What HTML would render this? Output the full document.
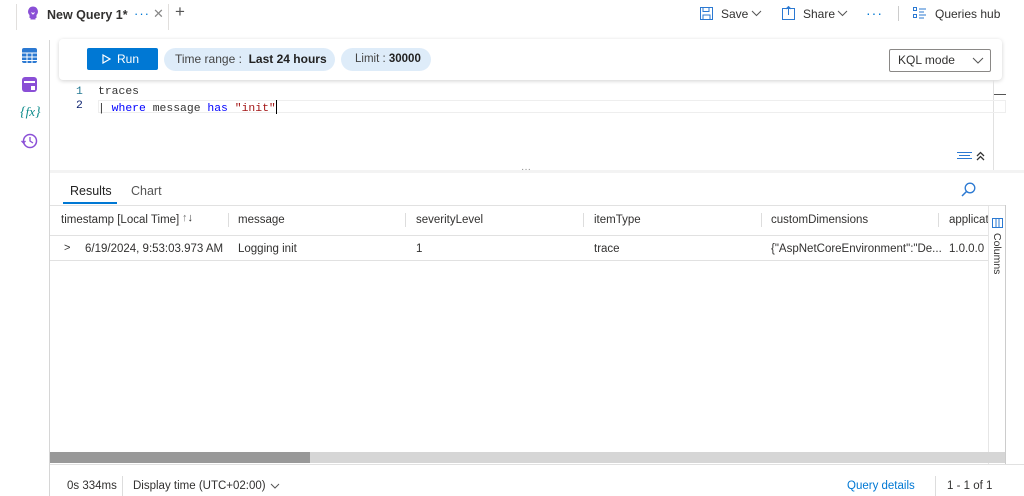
<!DOCTYPE html>
<html><head><style>
*{box-sizing:border-box;margin:0;padding:0}
body{width:1024px;height:496px;background:#fff;font-family:"Liberation Sans",sans-serif;font-size:12px;color:#323130;position:relative;overflow:hidden}
.a{position:absolute;white-space:nowrap}
.mono{font-family:"Liberation Mono",monospace;font-size:11.4px}
</style></head><body>
<div class="a" style="left:16px;top:4px;width:1px;height:26px;background:#e1dfdd"></div>
<div class="a" style="left:168px;top:4px;width:1px;height:26px;background:#e1dfdd"></div>
<svg class="a" style="left:27px;top:6px" width="12" height="14" viewBox="0 0 12 14"><path d="M6 0.5a5 5 0 0 0-3.5 8.5v3h7v-3A5 5 0 0 0 6 0.5z" fill="#8a4fd6"/><rect x="3.5" y="12" width="5" height="1.5" fill="#8a4fd6"/><path d="M4.5 6.5l1.5 1.5 1.5-1.5" stroke="#fff" fill="none"/></svg>
<div class="a" style="left:47px;top:8px;font-weight:bold;font-size:12.5px">New Query 1*</div>
<div class="a" style="left:134px;top:6px;color:#0078d4;font-size:13px;letter-spacing:1px">···</div>
<div class="a" style="left:153px;top:6px;color:#888;font-size:13px">✕</div>
<div class="a" style="left:175px;top:2px;color:#555;font-size:17px">+</div>
<svg class="a" style="left:700px;top:7px" width="13" height="13" viewBox="0 0 13 13"><rect x="0.5" y="0.5" width="12" height="12" fill="none" stroke="#2b79d2"/><rect x="3" y="0.5" width="6" height="4" fill="none" stroke="#2b79d2"/><rect x="3" y="8" width="7" height="4.5" fill="none" stroke="#2b79d2"/></svg>
<div class="a" style="left:721px;top:7px;font-size:12px">Save</div>
<svg class="a" style="left:751px;top:10px" width="11" height="7"><path d="M1 1l4.5 4.5L10 1" stroke="#555" fill="none"/></svg>
<svg class="a" style="left:782px;top:6px" width="13" height="14"><rect x="0.5" y="2.5" width="12" height="11" fill="none" stroke="#2b79d2"/><path d="M6.5 9V0.5M4 3l2.5-2.5L9 3" stroke="#2b79d2" fill="none"/></svg>
<div class="a" style="left:803px;top:7px;font-size:12px">Share</div>
<svg class="a" style="left:837px;top:10px" width="11" height="7"><path d="M1 1l4.5 4.5L10 1" stroke="#555" fill="none"/></svg>
<div class="a" style="left:866px;top:5px;color:#0078d4;font-size:14px;letter-spacing:1px">···</div>
<div class="a" style="left:898px;top:6px;width:1px;height:15px;background:#ccc"></div>
<svg class="a" style="left:913px;top:7px" width="14" height="12"><rect x="0.5" y="0.5" width="3" height="3" fill="none" stroke="#2b79d2"/><rect x="0.5" y="7.5" width="3" height="3" fill="none" stroke="#2b79d2"/><path d="M6 2h7M6 8h7M6 11h5M6 5h5" stroke="#2b79d2"/></svg>
<div class="a" style="left:935px;top:7px;font-size:12px">Queries hub</div>

<div class="a" style="left:49px;top:40px;width:1px;height:456px;background:#d6d6d6"></div>
<svg class="a" style="left:22px;top:48px" width="15" height="15"><rect width="15" height="15" rx="2" fill="#2b79d2"/><path d="M0 5h15M0 9h15M0 12.5h15M5 5v10M10 5v10" stroke="#fff"/></svg>
<svg class="a" style="left:22px;top:77px" width="15" height="15"><rect width="15" height="15" rx="3" fill="#8a4fd6"/><rect x="2" y="4" width="11" height="2" fill="#fff"/><rect x="9" y="9" width="4" height="4" fill="#fff"/></svg>
<div class="a" style="left:20px;top:104px;color:#0a8a8a;font-family:'Liberation Serif',serif;font-style:italic;font-size:14px">{<span style="font-size:13px">fx</span>}</div>
<svg class="a" style="left:21px;top:133px" width="17" height="16"><circle cx="9" cy="8" r="6.5" fill="none" stroke="#8a4fd6" stroke-width="1.5"/><path d="M9 4v4l3 2" stroke="#8a4fd6" fill="none" stroke-width="1.3"/><path d="M0.5 8l2 2 2-2" stroke="#8a4fd6" fill="none" stroke-width="1.3"/></svg>

<div class="a" style="left:59px;top:39px;width:943px;height:41px;background:#fff;border-radius:4px;box-shadow:0 1px 4px rgba(0,0,0,.18)"></div>
<div class="a" style="left:87px;top:48px;width:71px;height:22px;background:#0078d4;border-radius:2px;color:#fff;font-size:12px;line-height:22px;padding-left:15px"><svg width="9" height="10" style="vertical-align:-1px;margin-right:6px"><path d="M1 1l7 4-7 4z" fill="none" stroke="#fff" stroke-width="1.2"/></svg>Run</div>
<div class="a" style="left:164px;top:48px;width:171px;height:23px;background:#deecf9;border-radius:12px;font-size:12px;line-height:23px;padding-left:11px;color:#444">Time range :&nbsp; <b style="color:#222;font-weight:600">Last 24 hours</b></div>
<div class="a" style="left:341px;top:48px;width:90px;height:23px;background:#deecf9;border-radius:12px;font-size:11.5px;line-height:23px;padding-left:14px;color:#444">Limit : <b style="color:#222">30000</b></div>
<div class="a" style="left:889px;top:49px;width:102px;height:23px;border:1px solid #8a8886;border-radius:2px;font-size:12px;line-height:21px;padding-left:8px">KQL mode</div>
<svg class="a" style="left:972px;top:57px" width="12" height="8"><path d="M1 1l5 5 5-5" stroke="#555" fill="none"/></svg>

<div class="a" style="left:993px;top:80px;width:1px;height:90px;background:#e1e1e1"></div>
<div class="a" style="left:994px;top:94px;width:12px;height:1px;background:#555"></div>
<div class="a" style="left:98px;top:100px;width:908px;height:13px;border:1px solid #eee"></div>
<div class="a mono" style="left:76px;top:86px;color:#237893">1</div>
<div class="a mono" style="left:76px;top:100px;color:#0b216f">2</div>
<div class="a mono" style="left:98px;top:86px;color:#333">traces</div>
<div class="a mono" style="left:98px;top:100px;color:#333">| <span style="color:#0000ff">where</span> message <span style="color:#0000ff">has</span> <span style="color:#a31515">"init"</span><span style="display:inline-block;width:1px;height:14px;background:#000;vertical-align:-3px"></span></div>
<svg class="a" style="left:957px;top:151px" width="30" height="10"><path d="M0 1.5h15M2 4.5h11M0 7.5h15" stroke="#2b79d2"/><path d="M20 5l3.5-3.5L27 5M20 9l3.5-3.5L27 9" stroke="#333" fill="none" stroke-width="1.3"/></svg>
<div class="a" style="left:50px;top:170px;width:974px;height:3px;background:#f3f3f3"></div>
<div class="a" style="left:521px;top:164px;color:#888;font-size:10px">···</div>

<div class="a" style="left:70px;top:184px;font-size:12.5px;color:#222">Results</div>
<div class="a" style="left:63px;top:202px;width:54px;height:2px;background:#0078d4"></div>
<div class="a" style="left:131px;top:184px;font-size:12.5px;color:#555">Chart</div>
<svg class="a" style="left:961px;top:182px" width="15" height="15"><circle cx="9" cy="6" r="4.8" fill="none" stroke="#2b79d2" stroke-width="1.3"/><path d="M5.5 9.5L1 14" stroke="#2b79d2" stroke-width="1.5"/></svg>
<div class="a" style="left:50px;top:205px;width:956px;height:1px;background:#e1e1e1"></div>
<div class="a" style="left:1005px;top:205px;width:1px;height:260px;background:#ccc"></div>
<div class="a" style="left:988px;top:206px;width:1px;height:259px;background:#e6e6e6"></div>
<div class="a" style="left:50px;top:235px;width:938px;height:1px;background:#e1e1e1"></div>
<div class="a" style="left:50px;top:260px;width:938px;height:1px;background:#e1e1e1"></div>
<div class="a" style="left:61px;top:214px;font-size:11.5px">timestamp [Local Time]</div>
<div class="a" style="left:182px;top:212px;font-size:11px;color:#777">↑<span style="color:#333">↓</span></div>
<div class="a" style="left:228px;top:213px;width:1px;height:14px;background:#ddd"></div>
<div class="a" style="left:238px;top:214px;font-size:11.5px">message</div>
<div class="a" style="left:405px;top:213px;width:1px;height:14px;background:#ddd"></div>
<div class="a" style="left:416px;top:214px;font-size:11.5px">severityLevel</div>
<div class="a" style="left:583px;top:213px;width:1px;height:14px;background:#ddd"></div>
<div class="a" style="left:594px;top:214px;font-size:11.5px">itemType</div>
<div class="a" style="left:761px;top:213px;width:1px;height:14px;background:#ddd"></div>
<div class="a" style="left:771px;top:214px;font-size:11.5px">customDimensions</div>
<div class="a" style="left:938px;top:213px;width:1px;height:14px;background:#ddd"></div>
<div class="a" style="left:949px;top:214px;width:39px;overflow:hidden;font-size:11.5px">applicat</div>
<svg class="a" style="left:992px;top:218px" width="11" height="10"><rect x="0.5" y="0.5" width="10" height="9" fill="none" stroke="#2b79d2"/><path d="M4 0v10M7 0v10" stroke="#2b79d2"/></svg>
<div class="a" style="top:233px;font-size:10.5px;transform:rotate(90deg);transform-origin:0 0;left:1003px">Columns</div>
<div class="a" style="left:64px;top:242px;font-size:11px">&gt;</div>
<div class="a" style="left:85px;top:243px;font-size:11.5px">6/19/2024, 9:53:03.973 AM</div>
<div class="a" style="left:238px;top:243px;font-size:11.5px">Logging init</div>
<div class="a" style="left:416px;top:243px;font-size:11.5px">1</div>
<div class="a" style="left:594px;top:243px;font-size:11.5px">trace</div>
<div class="a" style="left:771px;top:243px;font-size:11.5px">{"AspNetCoreEnvironment":"De...</div>
<div class="a" style="left:949px;top:243px;font-size:11.5px">1.0.0.0</div>

<div class="a" style="left:50px;top:452px;width:955px;height:11px;background:#d6d6d6"></div>
<div class="a" style="left:50px;top:452px;width:260px;height:11px;background:#999"></div>
<div class="a" style="left:50px;top:464px;width:974px;height:1px;background:#e1e1e1"></div>

<div class="a" style="left:67px;top:480px;font-size:11.5px">0s 334ms</div>
<div class="a" style="left:122px;top:476px;width:1px;height:20px;background:#ddd"></div>
<div class="a" style="left:133px;top:480px;font-size:11.5px">Display time (UTC+02:00)</div>
<svg class="a" style="left:270px;top:483px" width="10" height="7"><path d="M1 1l4 4 4-4" stroke="#555" fill="none"/></svg>
<div class="a" style="left:847px;top:480px;font-size:11.5px;color:#0078d4">Query details</div>
<div class="a" style="left:935px;top:476px;width:1px;height:20px;background:#ddd"></div>
<div class="a" style="left:947px;top:480px;font-size:11.5px">1 - 1 of 1</div>
</body></html>
